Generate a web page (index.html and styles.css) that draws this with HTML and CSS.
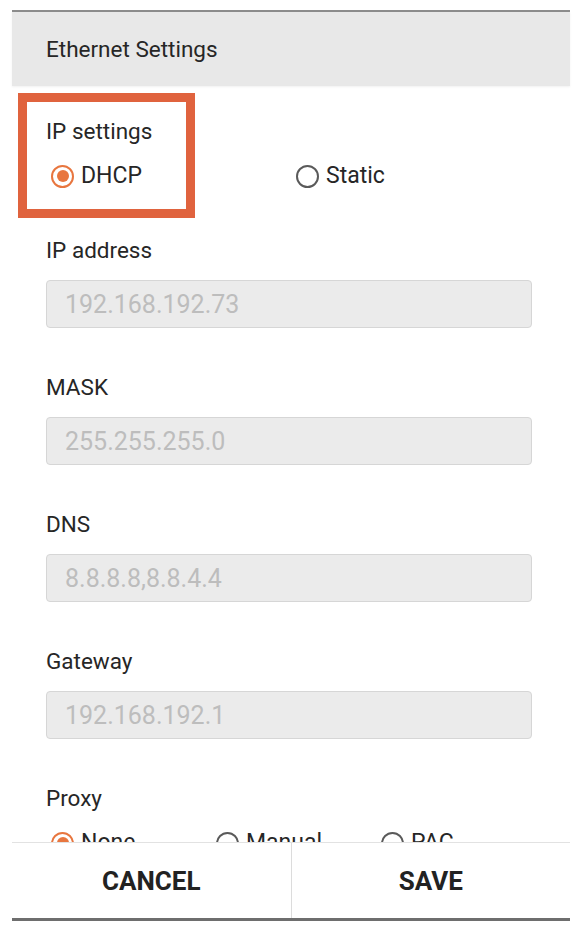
FILE: index.html
```html
<!DOCTYPE html>
<html lang="en">
<head>
<meta charset="utf-8">
<title>Ethernet Settings</title>
<link rel="stylesheet" href="styles.css">
</head>
<body>
<div class="dialog">
  <div class="dialog-header">Ethernet Settings</div>
  <div class="dialog-body">
    <div class="highlight"></div>
    <div class="section section-ip">
      <div class="label">IP settings</div>
      <div class="radio-row">
        <div class="radio radio-wide checked"><span class="dot"></span><span class="radio-text">DHCP</span></div>
        <div class="radio"><span class="dot"></span><span class="radio-text">Static</span></div>
      </div>
    </div>
    <div class="section">
      <div class="label">IP address</div>
      <div class="input">192.168.192.73</div>
    </div>
    <div class="section">
      <div class="label">MASK</div>
      <div class="input">255.255.255.0</div>
    </div>
    <div class="section">
      <div class="label">DNS</div>
      <div class="input">8.8.8.8,8.8.4.4</div>
    </div>
    <div class="section">
      <div class="label">Gateway</div>
      <div class="input">192.168.192.1</div>
    </div>
    <div class="section">
      <div class="label">Proxy</div>
      <div class="radio-row">
        <div class="radio radio-mid checked"><span class="dot"></span><span class="radio-text">None</span></div>
        <div class="radio radio-mid"><span class="dot"></span><span class="radio-text">Manual</span></div>
        <div class="radio"><span class="dot"></span><span class="radio-text">PAC</span></div>
      </div>
    </div>
  </div>
  <div class="dialog-footer">
    <div class="btn">CANCEL</div>
    <div class="btn btn-right">SAVE</div>
  </div>
</div>
</body>
</html>
```

FILE: styles.css
```css
* { box-sizing: border-box; }

html, body {
  margin: 0;
  padding: 0;
  background: #ffffff;
}

body {
  font-family: Roboto, "Noto Sans", "Liberation Sans", sans-serif;
  color: #222222;
}

.dialog {
  margin: 10px 16px 0 12px;
  width: 558px;
  border-top: 2px solid #8c8c8c;
  display: flex;
  flex-direction: column;
}

.dialog-header {
  height: 74px;
  background: #e8e8e8;
  padding-left: 34px;
  display: flex;
  align-items: center;
  font-size: 22.5px;
  color: #262626;
  box-shadow: 0 1px 2px rgba(0, 0, 0, 0.06);
  position: relative;
  z-index: 1;
}

.dialog-body {
  height: 756px;
  overflow: hidden;
  position: relative;
  padding: 31px 38px 0 34px;
}

.highlight {
  position: absolute;
  left: 6px;
  top: 7px;
  width: 177px;
  height: 125px;
  border: 9px solid #e0633e;
}

.section {
  margin-bottom: 45px;
}

.label {
  font-size: 22.5px;
  line-height: 28px;
  color: #262626;
}

.radio-row {
  display: flex;
  align-items: center;
  margin-top: 16px;
  height: 30px;
}

.radio {
  display: flex;
  align-items: center;
  gap: 7px;
  padding-left: 5px;
}

.radio-wide { width: 245px; }
.radio-mid { width: 165px; }

.dot {
  width: 23px;
  height: 23px;
  border-radius: 50%;
  border: 2px solid #5a5a5a;
  display: inline-flex;
  align-items: center;
  justify-content: center;
  flex: none;
}

.checked .dot {
  border-color: #e8763f;
}

.checked .dot::after {
  content: "";
  width: 12px;
  height: 12px;
  border-radius: 50%;
  background: #e8763f;
}

.radio-text {
  font-size: 23px;
  line-height: 30px;
  color: #262626;
}

.input {
  margin-top: 16px;
  height: 48px;
  border: 1.5px solid #d6d6d6;
  border-radius: 4px;
  background: #ebebeb;
  padding-left: 18px;
  display: flex;
  align-items: center;
  font-size: 25px;
  color: #bdbdbd;
}

.dialog-footer {
  display: flex;
  height: 79px;
  border-top: 1px solid #e2e2e2;
  border-bottom: 3px solid #6e6e6e;
  background: #ffffff;
}

.btn {
  flex: 1;
  display: flex;
  align-items: center;
  justify-content: center;
  font-size: 26px;
  font-weight: 700;
  color: #222222;
}

.btn-right {
  border-left: 1px solid #dcdcdc;
}
```
